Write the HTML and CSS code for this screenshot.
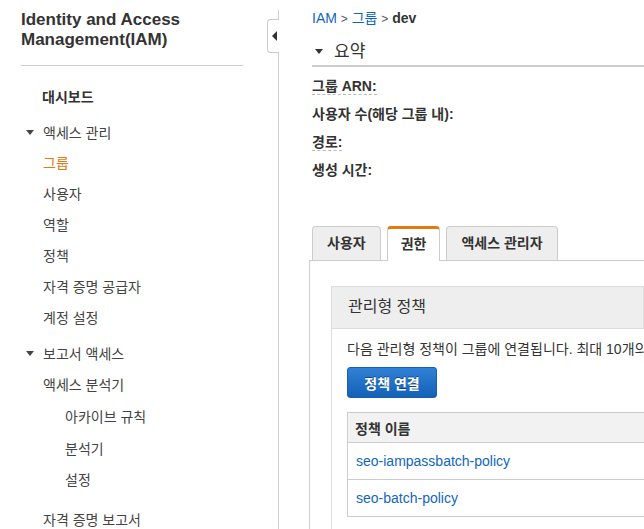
FILE: index.html
```html
<!DOCTYPE html>
<html lang="ko">
<head>
  <meta charset="UTF-8" />
  <meta name="viewport" content="width=device-width, initial-scale=1.0"/>
  <title>IAM - 그룹 dev</title>
  <link rel="stylesheet" href="styles.css">
</head>
<body>

  <div class="page">
    <aside class="sidebar">
      <h1 class="brand">Identity and Access Management(IAM)</h1>
      <ul class="nav">
        <li class="nav-item top">대시보드</li>
        <li class="nav-head"><span class="caret"></span>액세스 관리</li>
        <li class="nav-item active">그룹</li>
        <li class="nav-item">사용자</li>
        <li class="nav-item">역할</li>
        <li class="nav-item">정책</li>
        <li class="nav-item">자격 증명 공급자</li>
        <li class="nav-item">계정 설정</li>
        <li class="nav-head"><span class="caret"></span>보고서 액세스</li>
        <li class="nav-item first-sub">액세스 분석기</li>
        <li class="nav-item sub">아카이브 규칙</li>
        <li class="nav-item sub">분석기</li>
        <li class="nav-item sub">설정</li>
        <li class="nav-item last">자격 증명 보고서</li>
      </ul>
      <div class="collapse"><span></span></div>
    </aside>

    <main class="main">
      <div class="crumbs">
        <a href="#">IAM</a> <span class="sep">&gt;</span> <a href="#">그룹</a> <span class="sep">&gt;</span> <b>dev</b>
      </div>

      <h2 class="summary-title"><span class="caret"></span>요약</h2>
      <dl class="summary">
        <dt><span class="dotted">그룹 ARN:</span></dt>
        <dt>사용자 수(해당 그룹 내):</dt>
        <dt><span class="dotted">경로:</span></dt>
        <dt>생성 시간:</dt>
      </dl>

      <div class="tabs">
        <div class="tab">사용자</div>
        <div class="tab current">권한</div>
        <div class="tab">액세스 관리자</div>
      </div>

      <div class="tab-body">
        <div class="panel">
          <div class="panel-head">관리형 정책</div>
          <div class="panel-body">
            <p class="note">다음 관리형 정책이 그룹에 연결됩니다. 최대 10개의 관리형 정책을 연결할 수 있습니다.</p>
            <button class="btn-primary">정책 연결</button>
            <table class="policies">
              <thead>
                <tr><th>정책 이름</th></tr>
              </thead>
              <tbody>
                <tr><td><a href="#">seo-iampassbatch-policy</a></td></tr>
                <tr><td><a href="#">seo-batch-policy</a></td></tr>
              </tbody>
            </table>
          </div>
        </div>
      </div>
    </main>
  </div>

</body>
</html>
```

FILE: styles.css
```css
html, body {
  margin: 0;
  padding: 0;
  overflow: hidden;
}
body {
  font-family: "Liberation Sans", Arial, "Noto Sans CJK KR", sans-serif;
  font-size: 14px;
  color: #444;
  background: #fff;
}
a {
  color: #1166bb;
  text-decoration: none;
}
.page {
  display: flex;
  width: 644px;
  height: 529px;
  overflow: hidden;
}

/* left nav */
.sidebar {
  position: relative;
  width: 278px;
  flex: none;
  border-right: 1px solid #ccc;
  margin-top: 10px;
}
.brand {
  margin: 0 35px 0 21px;
  padding-bottom: 15px;
  font-size: 17px;
  line-height: 20px;
  color: #333;
  border-bottom: 1px solid #ccc;
}
.nav {
  list-style: none;
  margin: 0;
  padding: 16px 0 0 0;
}
.nav-item {
  height: 31px;
  line-height: 31px;
  padding-left: 43px;
}
.nav-item.top {
  font-weight: bold;
  color: #333;
  padding-left: 42px;
}
.nav-item.active {
  color: #e47911;
}
.nav-item.first-sub {
  margin-top: 1px;
}
.nav-item.sub {
  padding-left: 65px;
  height: 31.5px;
  line-height: 32px;
}
.nav-item.last {
  margin-top: 9px;
}
.nav-head {
  height: 29px;
  line-height: 29px;
  margin-top: 6px;
  padding-left: 26px;
  color: #444;
}
.caret {
  display: inline-block;
  width: 0;
  height: 0;
  border-left: 4px solid transparent;
  border-right: 4px solid transparent;
  border-top: 5px solid #444;
  margin-right: 9px;
  vertical-align: 3px;
}
.collapse {
  position: absolute;
  top: 9px;
  right: -1px;
  width: 11px;
  height: 32px;
  background: #fff;
  border: 1px solid #ccc;
  border-right: none;
  border-radius: 4px 0 0 4px;
  display: flex;
  align-items: center;
  justify-content: center;
}
.collapse span {
  width: 0;
  height: 0;
  border-top: 5px solid transparent;
  border-bottom: 5px solid transparent;
  border-right: 5px solid #333;
  margin-left: 2px;
}

/* main */
.main {
  flex: 1;
  min-width: 0;
  padding-left: 33px;
}
.crumbs {
  margin-top: 9px;
  line-height: 18px;
}
.crumbs .sep {
  color: #555;
  font-size: 12px;
}
.crumbs b {
  color: #333;
}
.summary-title {
  margin: 14px 0 0 0;
  padding: 0 0 3px 3px;
  font-size: 17px;
  font-weight: normal;
  line-height: 20px;
  color: #333;
  border-bottom: 2px solid #ccc;
}
.summary-title .caret {
  margin-right: 11px;
  border-top-color: #333;
}
.summary {
  margin: 9px 0 0 0;
}
.summary dt {
  font-weight: bold;
  color: #333;
  line-height: 20px;
  height: 28px;
}
.dotted {
  border-bottom: 1px dashed #bbb;
}

/* tabs */
.tabs {
  display: flex;
  gap: 6px;
  margin-top: 38px;
  position: relative;
  z-index: 1;
}
.tab {
  height: 33px;
  line-height: 33px;
  padding: 0 14px;
  background: #eee;
  border: 1px solid #ccc;
  border-bottom: none;
  border-radius: 4px 4px 0 0;
  font-weight: bold;
  color: #333;
}
.tab.current {
  background: #fff;
  border-top: 3px solid #e47911;
  height: 32px;
  line-height: 31px;
  margin-bottom: -1px;
  padding: 0 13px;
}
.tab-body {
  margin-left: -3px;
  border: 1px solid #ccc;
  border-right: none;
  padding: 25px 0 0 21px;
  height: 300px;
}
.panel {
  border-left: 1px solid #ddd;
  height: 100%;
}
.panel-head {
  height: 41px;
  line-height: 40px;
  padding-left: 16px;
  background: #eee;
  border: 1px solid #ddd;
  border-left: none;
  font-size: 16px;
  color: #333;
}
.panel-body {
  padding: 10px 0 0 15px;
}
.note {
  margin: 0;
  line-height: 20px;
  color: #333;
  white-space: nowrap;
}
.btn-primary {
  margin-top: 8px;
  width: 90px;
  height: 31px;
  border: 1px solid #1a5fa8;
  border-radius: 3px;
  background: linear-gradient(#2f80d6, #1462b7);
  color: #fff;
  font-family: inherit;
  font-size: 14px;
  font-weight: bold;
  text-shadow: 0 -1px 0 rgba(0,0,0,0.4);
  cursor: pointer;
  display: block;
}
.policies {
  margin-top: 14px;
  width: 400px;
  border-collapse: collapse;
}
.policies th {
  text-align: left;
  background: #f2f2f2;
  border: 1px solid #ccc;
  height: 29px;
  padding: 0 0 0 7px;
  color: #333;
}
.policies td {
  border: 1px solid #ccc;
  height: 36px;
  padding: 0 0 0 8px;
}
```
